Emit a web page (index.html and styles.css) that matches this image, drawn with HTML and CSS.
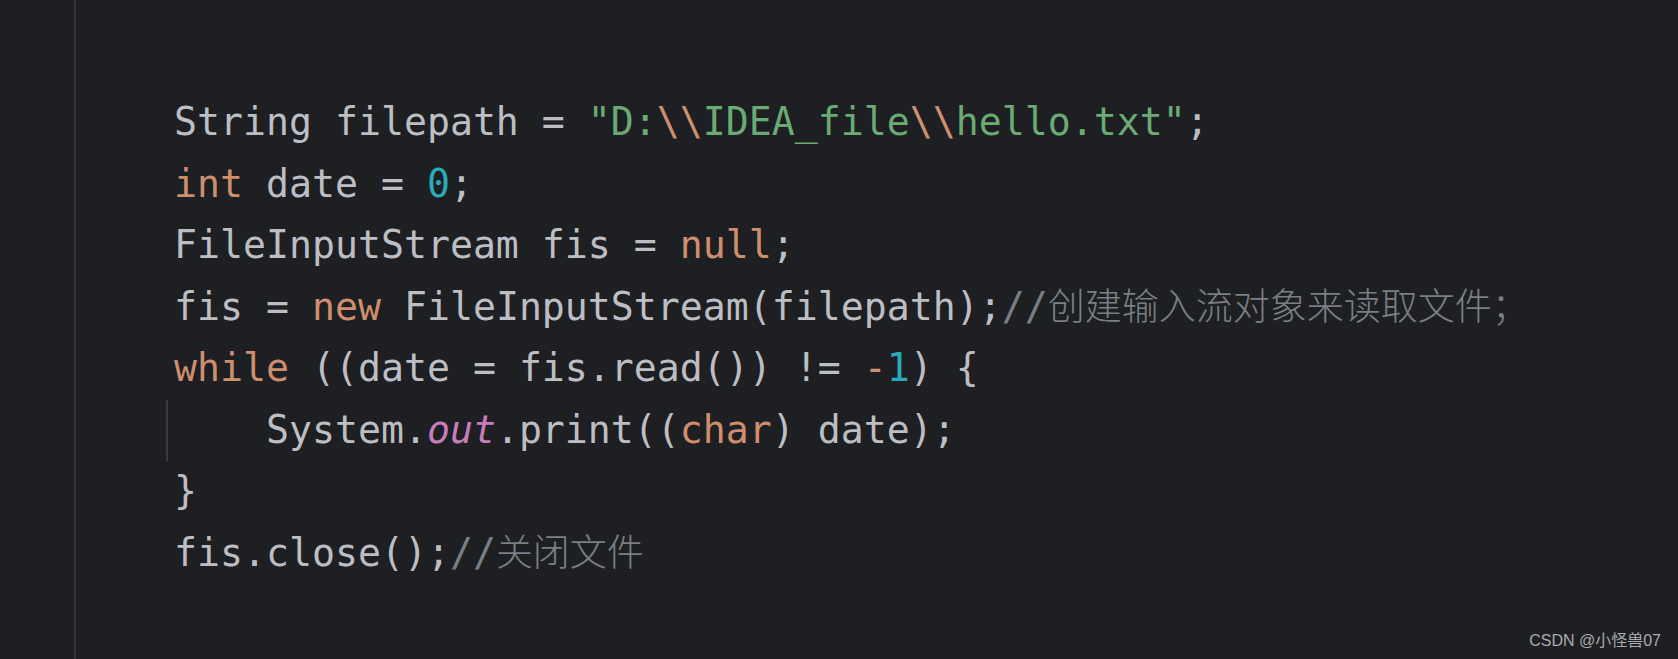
FILE: index.html
```html
<!DOCTYPE html>
<html lang="zh">
<head>
<meta charset="utf-8">
<title>Code</title>
<link rel="stylesheet" href="styles.css">
</head>
<body>
<div class="editor">
  <div class="gutter"></div>
  <div class="code">
    <div class="line">String filepath = <span class="str">"D:<span class="kw">\\</span>IDEA_file<span class="kw">\\</span>hello.txt"</span>;</div>
    <div class="line"><span class="kw">int</span> date = <span class="num">0</span>;</div>
    <div class="line">FileInputStream fis = <span class="kw">null</span>;</div>
    <div class="line">fis = <span class="kw">new</span> FileInputStream(filepath);<span class="cm">//<span class="cjk">创建输入流对象来读取文件；</span></span></div>
    <div class="line"><span class="kw">while</span> ((date = fis.read()) != <span class="kw">-</span><span class="num">1</span>) {</div>
    <div class="line guide">    System.<span class="field">out</span>.print((<span class="kw">char</span>) date);</div>
    <div class="line">}</div>
    <div class="line">fis.close();<span class="cm">//<span class="cjk">关闭文件</span></span></div>
  </div>
</div>
<div class="watermark">CSDN @小怪兽07</div>
</body>
</html>
```

FILE: styles.css
```css
html, body {
  margin: 0;
  padding: 0;
  background: #1e1f22;
}
body {
  width: 1678px;
  height: 659px;
  overflow: hidden;
  position: relative;
}
.editor {
  display: flex;
  height: 659px;
}
.gutter {
  width: 74px;
  flex: none;
  border-right: 2px solid #313337;
}
.code {
  padding-top: 92px;
  padding-left: 98px;
  font-family: "DejaVu Sans Mono", "Liberation Mono", monospace;
  font-size: 38.2px;
  color: #bcbec4;
}
.line {
  height: 61.5px;
  line-height: 61.5px;
  white-space: pre;
}
.guide {
  margin-left: -8px;
  padding-left: 6px;
  border-left: 2px solid #393b40;
}
.kw { color: #cf8e6d; }
.str { color: #6aab73; }
.num { color: #2aacb8; }
.field { color: #c77dbb; font-style: italic; }
.cm { color: #7a7e85; }
.cjk {
  font-family: "Noto Sans CJK SC", sans-serif;
  font-size: 37px;
  font-weight: 300;
  line-height: 0;
}
.watermark {
  position: absolute;
  right: 17px;
  bottom: 8px;
  font-family: "Liberation Sans", "Noto Sans CJK SC", sans-serif;
  font-size: 16px;
  color: #a9abaf;
  line-height: 20px;
}
```
